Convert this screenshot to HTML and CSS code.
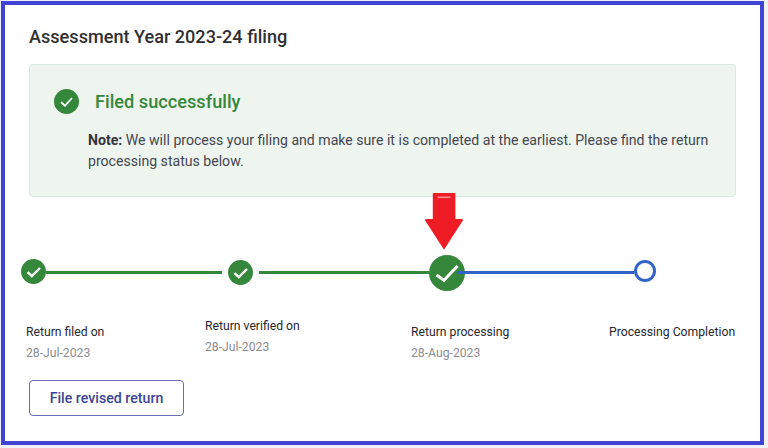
FILE: index.html
```html
<!DOCTYPE html>
<html lang="en">
<head>
<meta charset="utf-8">
<title>Assessment Year 2023-24 filing</title>
<link rel="stylesheet" href="styles.css">
</head>
<body>
<main class="frame">
  <h1 class="title">Assessment Year 2023-24 filing</h1>
  <section class="banner">
    <div class="banner-head">
      <svg class="dot" viewBox="0 0 25 25"><circle cx="12.5" cy="12.5" r="12.5" fill="#35873b"/><path d="M7 13l4 3.8L18 9" fill="none" stroke="#fff" stroke-width="1.8"/></svg>
      <h2 class="banner-title">Filed successfully</h2>
    </div>
    <p class="note"><strong>Note:</strong> We will process your filing and make sure it is completed at the earliest. Please find the return processing status below.</p>
  </section>
  <div class="track">
    <svg class="dot up4" viewBox="0 0 25 25"><circle cx="12.5" cy="12.5" r="12.5" fill="#35873b"/><path d="M6.5 13.2l4.3 4L19 9" fill="none" stroke="#fff" stroke-width="2.4"/></svg>
    <span class="line green first"></span>
    <svg class="dot up2 second" viewBox="0 0 25 25"><circle cx="12.5" cy="12.5" r="12.5" fill="#35873b"/><path d="M6.5 13.2l4.3 4L19 9" fill="none" stroke="#fff" stroke-width="2.4"/></svg>
    <span class="line green third"></span>
    <svg class="dot-big" viewBox="0 0 36 36"><circle cx="18" cy="18" r="18" fill="#35873b"/><path d="M7.5 20l7.5 5.2L28.5 11" fill="none" stroke="#fff" stroke-width="3"/></svg>
    <span class="line blue"></span>
    <span class="dot-open"></span>
  </div>
  <div class="labels">
    <div class="step col1"><div class="step-name">Return filed on</div><div class="step-date">28-Jul-2023</div></div>
    <div class="step col2"><div class="step-name">Return verified on</div><div class="step-date">28-Jul-2023</div></div>
    <div class="step col3"><div class="step-name">Return processing</div><div class="step-date">28-Aug-2023</div></div>
    <div class="step col4"><div class="step-name">Processing Completion</div></div>
  </div>
  <button class="revise" type="button">File revised return</button>
  <svg class="arrow" viewBox="0 0 40 60"><path d="M9.4 1h21.4a.6.6 0 0 1 .6.6V27h7l.6 1.2L20 57.7 1 28.2 1.600 27h7.200V1.600a.6.6 0 0 1 .6-.6z" fill="#ee1c25"/><rect x="13.500" y="4.500" width="13" height="1.600" fill="#f58a90"/></svg>
</main>
</body>
</html>
```

FILE: styles.css
```css
* { box-sizing: border-box; }
html, body { margin: 0; padding: 0; }
body {
  width: 768px;
  height: 448px;
  overflow: hidden;
  background: #f0f1fa;
  font-family: Roboto, "Liberation Sans", sans-serif;
}
.frame {
  position: relative;
  width: 763px;
  height: 444px;
  margin: 1px 0 0 1px;
  padding: 20px 24px 0;
  background: #fff;
  border: 4px solid #4044d2;
}
.title {
  margin: 0;
  font-size: 18.1px;
  font-weight: 500;
  line-height: 24px;
  color: #2f2f33;
}
.banner {
  height: 133px;
  margin-top: 15px;
  padding: 23px 24px 0;
  background: #eef5ef;
  border: 1px solid #d9e9dd;
  border-radius: 4px;
}
.banner-head { display: flex; align-items: center; gap: 16px; height: 26px; }
.banner-title {
  margin: 0;
  font-size: 18.2px;
  font-weight: 500;
  color: #35873b;
}
.note {
  margin: 16px 0 0 34px;
  font-size: 14.1px;
  line-height: 21px;
  color: #44464f;
}
.note strong { font-weight: 700; color: #34343a; }
.dot { display: block; width: 25px; height: 25px; flex: none; }
.up4 { margin-bottom: 4px; }
.up2 { margin-bottom: 2px; }
.track {
  display: flex;
  align-items: center;
  height: 36px;
  margin: 58px 0 0 -8px;
}
.line { display: block; height: 3px; margin-bottom: 2px; flex: none; }
.green { background: #35873b; }
.first { width: 176px; }
.second { margin-left: 6px; }
.third { width: 170px; margin-left: 6px; }
.dot-big { display: block; width: 36px; height: 36px; flex: none; }
.blue { position: relative; width: 177px; margin-left: -8px; background: #3264c8; }
.dot-open {
  display: block;
  width: 22px;
  height: 22px;
  flex: none;
  margin-bottom: 4px;
  background: #fff;
  border: 3px solid #3264c8;
  border-radius: 50%;
}
.labels { display: flex; align-items: flex-start; margin: 31px 0 0 -3px; }
.step { flex: none; }
.col1 { width: 179px; }
.col2 { width: 206px; margin-top: -6px; }
.col3 { width: 198px; }
.col4 { width: 130px; }
.step-name {
  font-size: 12.2px;
  font-weight: 400;
  line-height: 20px;
  color: #26272c;
  white-space: nowrap;
}
.step-date {
  margin-top: 1px;
  font-size: 12.2px;
  line-height: 20px;
  color: #8b8d92;
}
.revise {
  display: block;
  width: 155px;
  height: 36px;
  margin-top: 17px;
  padding: 0;
  background: #fff;
  border: 1px solid #6a6cb8;
  border-radius: 4px;
  font-family: inherit;
  font-size: 14.2px;
  font-weight: 500;
  color: #3b4596;
}
.arrow { position: absolute; left: 419px; top: 187px; width: 40px; height: 60px; }
```
